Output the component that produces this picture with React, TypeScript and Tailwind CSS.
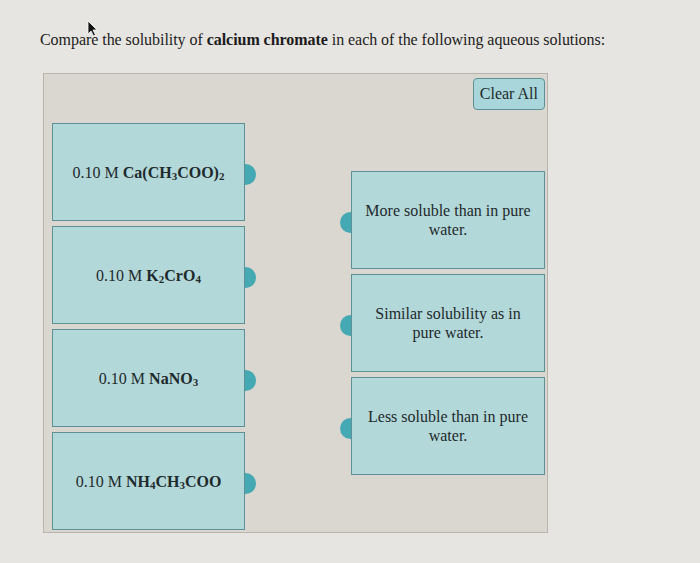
import React from 'react';

type Item = { key: string; label: React.ReactNode };

const solutions: Item[] = [
  {
    key: 'caac',
    label: (
      <>
        0.10 M <b>Ca(CH<sub>3</sub>COO)<sub>2</sub></b>
      </>
    ),
  },
  {
    key: 'k2cro4',
    label: (
      <>
        0.10 M <b>K<sub>2</sub>CrO<sub>4</sub></b>
      </>
    ),
  },
  {
    key: 'nano3',
    label: (
      <>
        0.10 M <b>NaNO<sub>3</sub></b>
      </>
    ),
  },
  {
    key: 'nh4ac',
    label: (
      <>
        0.10 M <b>NH<sub>4</sub>CH<sub>3</sub>COO</b>
      </>
    ),
  },
];

const answers: Item[] = [
  { key: 'more', label: 'More soluble than in pure water.' },
  { key: 'same', label: 'Similar solubility as in pure water.' },
  { key: 'less', label: 'Less soluble than in pure water.' },
];

const cardClass =
  'h-[98px] flex items-center justify-center text-center border border-[#5d9195] bg-[#b3d8da] text-[#1e2a2b] text-[16px] leading-[19px] [&_sub]:text-[11px] [&_sub]:leading-none';

// little pointer arrow sitting over the prompt
const Cursor: React.FC = () => (
  <svg width="11" height="17" viewBox="0 0 11 17" className="absolute left-[87px] top-[20px]">
    <path d="M1 1 L1 14 L4 11 L6.5 16 L8.5 15 L6 10 L10 10 Z" fill="#111" stroke="#fff" strokeWidth="0.8" />
  </svg>
);

export default function App() {
  return (
    <div
      className="relative w-[700px] h-[563px] bg-[#e7e5e1] overflow-hidden"
      style={{ fontFamily: '"Liberation Serif", "Times New Roman", serif' }}
    >
      <Cursor />
      <p className="pt-[28px] pl-[40px] text-[16px] text-[#1c1c1c] tracking-[-0.05px]">
        Compare the solubility of <b>calcium chromate</b> in each of the following aqueous solutions:
      </p>

      <div className="ml-[43px] mt-[21px] w-[505px] h-[460px] border border-[#b8b4ac] bg-[#dad6d0] pl-[8px] pr-[2px] pt-[4px]">
        <div className="flex justify-end">
          <button className="h-[32px] px-[6px] rounded-[4px] border border-[#5f9297] bg-[#a9d6da] text-[16px] text-[#1e2a2b]">
            Clear All
          </button>
        </div>

        <div className="flex mt-[13px]">
          {/* left: the solutions, each with a connector nub on the right */}
          <div className="flex flex-col gap-[5px]">
            {solutions.map((s) => (
              <div key={s.key} className="flex items-center">
                <div className={`${cardClass} w-[193px] px-2`}>
                  <span>{s.label}</span>
                </div>
                <div className="w-[11px] h-[21px] rounded-r-full bg-[#45a9b4] mt-[4px]" />
              </div>
            ))}
          </div>

          {/* right: the answer targets, nub on the left */}
          <div className="flex flex-col gap-[5px] ml-[84px] mt-[48px]">
            {answers.map((a) => (
              <div key={a.key} className="flex items-center">
                <div className="w-[11px] h-[21px] rounded-l-full bg-[#45a9b4] mt-[4px]" />
                <div className={`${cardClass} w-[194px] px-[12px]`}>
                  <span>{a.label}</span>
                </div>
              </div>
            ))}
          </div>
        </div>
      </div>
    </div>
  );
}
